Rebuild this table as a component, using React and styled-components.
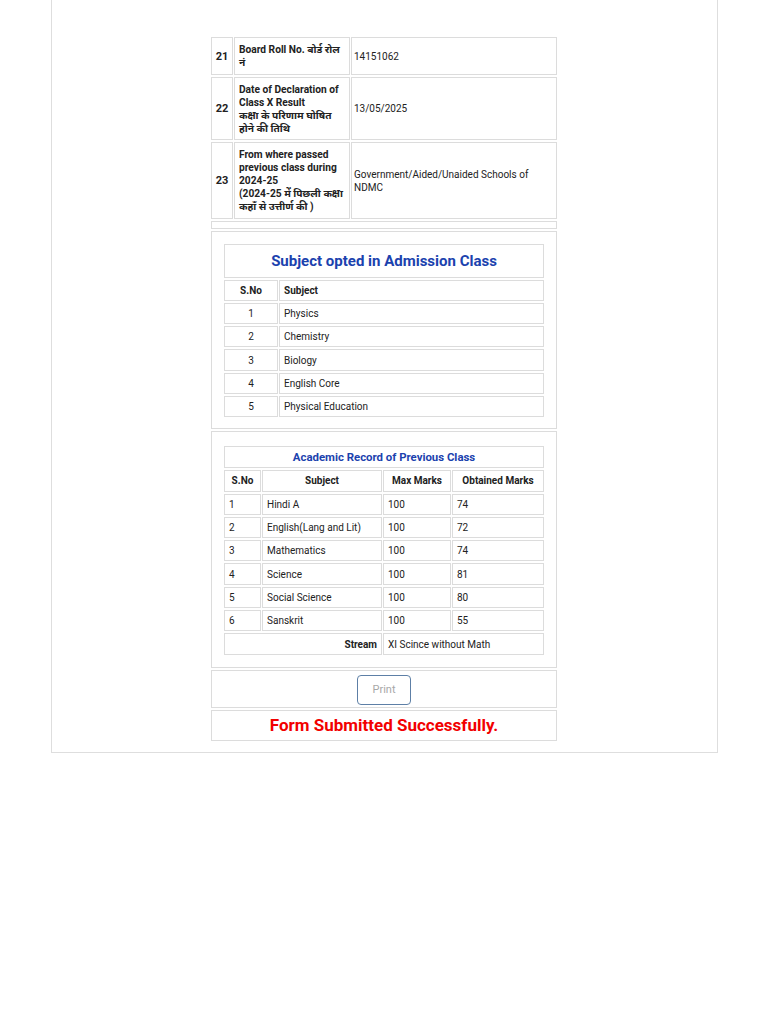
import styled, { createGlobalStyle } from "styled-components";

const GlobalStyle = createGlobalStyle`
  html, body {
    margin: 0;
    padding: 0;
    background: #fff;
  }
  body {
    font-family: Roboto, "Noto Sans", "Liberation Sans", sans-serif;
    color: #222;
  }
`;

const Page = styled.div`
  width: 665px;
  margin: 0 auto;
  padding: 35px 0 9px;
  border: 1px solid #dedede;
  border-top: none;
`;

const Sheet = styled.table`
  width: 348px;
  margin: 0 auto;
  border-collapse: separate;
  border-spacing: 1px 2px;
  font-size: 10px;
  line-height: 13px;

  td {
    box-sizing: border-box;
  }
`;

const Cell = styled.td`
  border: 1px solid #dcdcdc;
  padding: 5px ${(p) => p.$right || "2px"} 4.5px ${(p) => p.$left || "2px"};
  text-align: ${(p) => p.$align || "left"};
  font-weight: ${(p) => (p.$bold ? 700 : 400)};
  font-size: ${(p) => p.$size || "10px"};
  vertical-align: middle;
  width: ${(p) => p.$w || "auto"};
`;

const Section = styled.td`
  border: 1px solid #dcdcdc;
  padding: ${(p) => p.$pad || "10px 11px 9px"};
  text-align: ${(p) => p.$align || "left"};
`;

const Blank = styled.td`
  border: 1px solid #dcdcdc;
  height: 8px;
  padding: 0;
`;

const Inner = styled.table`
  width: 100%;
  border-collapse: separate;
  border-spacing: 1px 2px;
  font-size: 10px;
  line-height: 13px;
`;

const Title = styled.td`
  border: 1px solid #dcdcdc;
  text-align: center;
  color: #1b42ae;
  font-weight: 700;
  font-size: ${(p) => p.$size || "15px"};
  line-height: ${(p) => p.$lh || "19px"};
  padding: ${(p) => p.$pad || "7px 4px 6px"};
`;

const Row = styled.td`
  border: 1px solid #dcdcdc;
  height: 21.3px;
  padding: 3px 4px;
  text-align: ${(p) => p.$align || "left"};
  font-weight: ${(p) => (p.$bold ? 700 : 400)};
  width: ${(p) => p.$w || "auto"};
`;

const PrintButton = styled.button`
  width: 54px;
  height: 30px;
  background: #fff;
  border: 1.5px solid #5d7fa6;
  border-radius: 4px;
  color: #a8a8a8;
  font-family: Roboto, "Liberation Sans", sans-serif;
  font-size: 11px;
  cursor: pointer;
`;

const Success = styled.td`
  border: 1px solid #dcdcdc;
  text-align: center;
  color: #f20000;
  font-weight: 700;
  font-size: 17px;
  line-height: 21px;
  padding: 4px;
`;

const details = [
  {
    no: 21,
    label: ["Board Roll No. बोर्ड रोल नं"],
    value: "14151062",
  },
  {
    no: 22,
    label: ["Date of Declaration of Class X Result", "कक्षा के परिणाम घोषित होने की तिथि"],
    value: "13/05/2025",
  },
  {
    no: 23,
    label: ["From where passed previous class during 2024-25", "(2024-25 में पिछली कक्षा कहाँ से उत्तीर्ण की )"],
    value: "Government/Aided/Unaided Schools of NDMC",
  },
];

const subjects = ["Physics", "Chemistry", "Biology", "English Core", "Physical Education"];

const marks = [
  ["Hindi A", 100, 74],
  ["English(Lang and Lit)", 100, 72],
  ["Mathematics", 100, 74],
  ["Science", 100, 81],
  ["Social Science", 100, 80],
  ["Sanskrit", 100, 55],
];

export default function App() {
  return (
    <>
      <GlobalStyle />
      <Page>
        <Sheet>
          <tbody>
            {details.map((d) => (
              <tr key={d.no}>
                <Cell $bold $align="center" $w="22px" $size="11px">{d.no}</Cell>
                <Cell $bold $w="116px" $left="4px" $right="6px" $size="10.2px">
                  {d.label.map((l, i) => (
                    <div key={i}>{l}</div>
                  ))}
                </Cell>
                <Cell>{d.value}</Cell>
              </tr>
            ))}
            <tr>
              <Blank colSpan={3} />
            </tr>
            <tr>
              <Section colSpan={3}>
                <Inner>
                  <tbody>
                    <tr>
                      <Title colSpan={2}>Subject opted in Admission Class</Title>
                    </tr>
                    <tr>
                      <Row $bold $align="center" $w="54px">S.No</Row>
                      <Row $bold>Subject</Row>
                    </tr>
                    {subjects.map((s, i) => (
                      <tr key={s}>
                        <Row $align="center">{i + 1}</Row>
                        <Row>{s}</Row>
                      </tr>
                    ))}
                  </tbody>
                </Inner>
              </Section>
            </tr>
            <tr>
              <Section colSpan={3} $pad="12px 11px 10px">
                <Inner>
                  <tbody>
                    <tr>
                      <Title colSpan={4} $size="11.4px" $lh="14px" $pad="3px 4px">
                        Academic Record of Previous Class
                      </Title>
                    </tr>
                    <tr>
                      <Row $bold $align="center" $w="37px">S.No</Row>
                      <Row $bold $align="center" $w="120px">Subject</Row>
                      <Row $bold $align="center" $w="68px">Max Marks</Row>
                      <Row $bold $align="center">Obtained Marks</Row>
                    </tr>
                    {marks.map((m, i) => (
                      <tr key={m[0]}>
                        <Row>{i + 1}</Row>
                        <Row>{m[0]}</Row>
                        <Row>{m[1]}</Row>
                        <Row>{m[2]}</Row>
                      </tr>
                    ))}
                    <tr>
                      <Row colSpan={2} $bold $align="right">Stream</Row>
                      <Row colSpan={2}>XI Scince without Math</Row>
                    </tr>
                  </tbody>
                </Inner>
              </Section>
            </tr>
            <tr>
              <Section colSpan={3} $pad="4px 3px 2px" $align="center">
                <PrintButton>Print</PrintButton>
              </Section>
            </tr>
            <tr>
              <Success colSpan={3}>Form Submitted Successfully.</Success>
            </tr>
          </tbody>
        </Sheet>
      </Page>
    </>
  );
}
